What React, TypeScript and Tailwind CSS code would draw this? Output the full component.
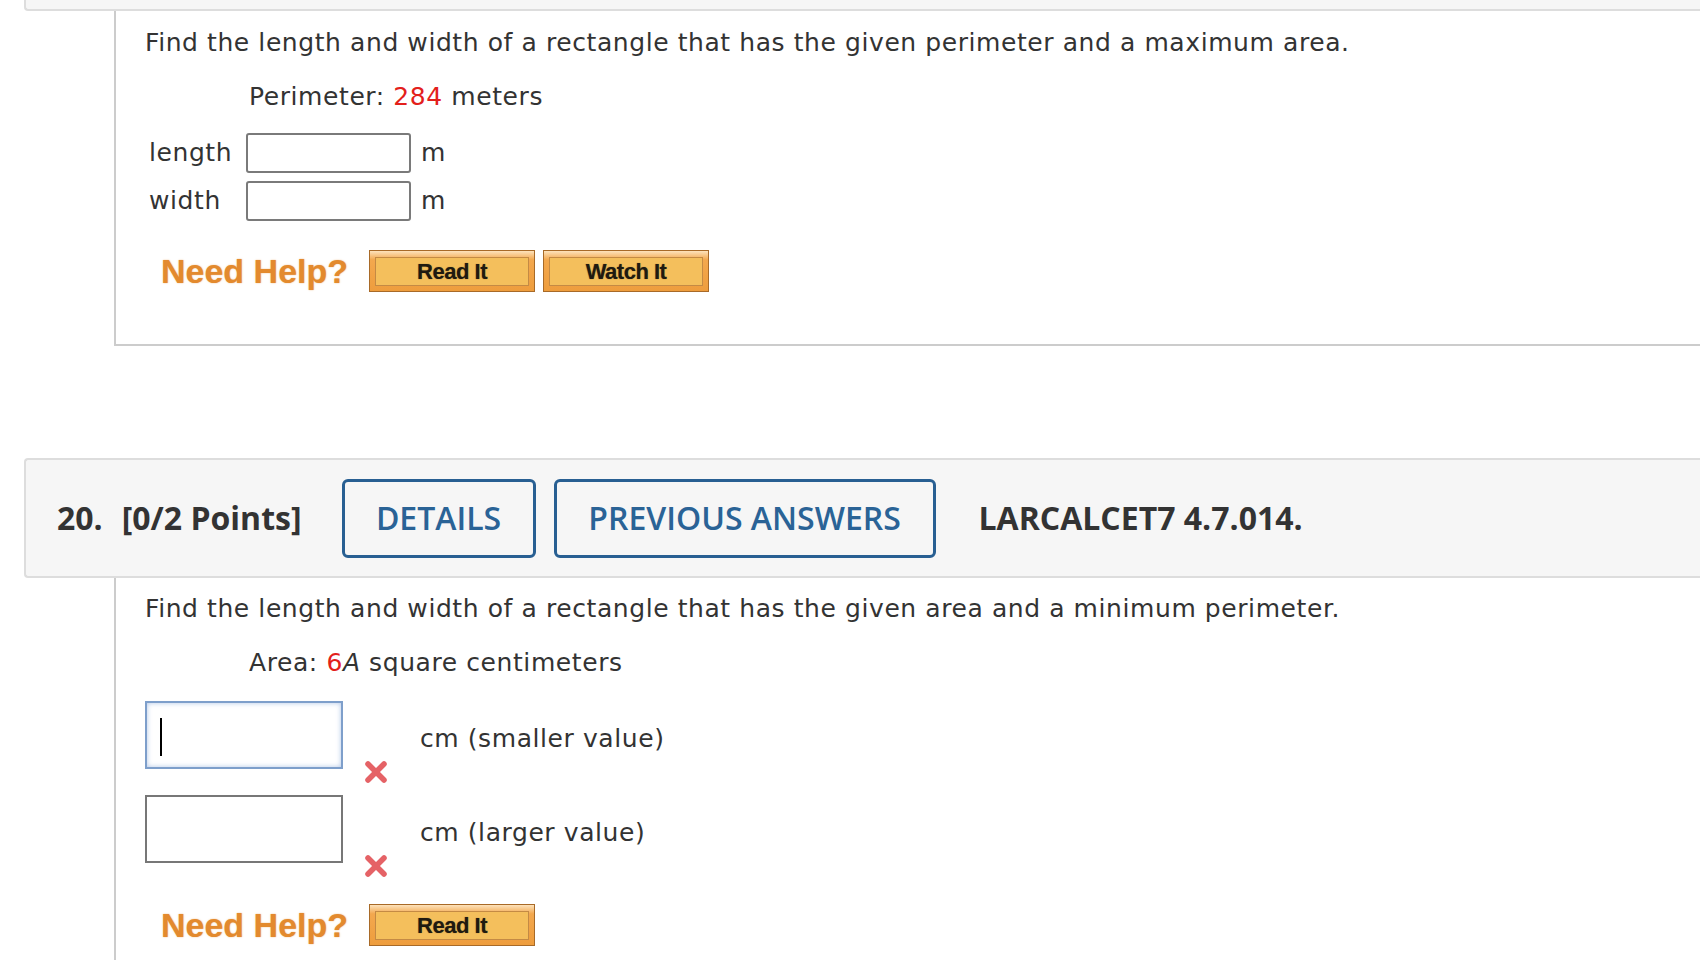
import React from 'react'

const body = { fontFamily: '"DejaVu Sans", Verdana, sans-serif' }
const head = { fontFamily: '"Open Sans", "Noto Sans", sans-serif' }
const arial = { fontFamily: '"Liberation Sans", Arial, sans-serif' }

// orange WebAssign style help button
function HelpButton({ label }: { label: string }) {
  return (
    <button
      type="button"
      className="w-[166px] h-[42px] border border-[#a86a28] bg-[linear-gradient(to_bottom,#fde2bb_0%,#f3a84e_22%,#ee9d3d_100%)] px-[5px] pt-[6px] pb-[5px]"
    >
      <div
        className="h-full w-full border border-[#c48a44] bg-[#f4bf5c] flex items-center justify-center text-[22px] font-bold tracking-[-0.5px] text-[#1f1a10] [text-shadow:0_0_1px_rgba(0,0,0,0.5)]"
        style={arial}
      >
        {label}
      </div>
    </button>
  )
}

function NeedHelp({ buttons }: { buttons: string[] }) {
  return (
    <div className="flex items-center tracking-normal">
      <span
        className="ml-[16px] text-[34px] font-bold leading-[42px] text-[#e38a2e] [text-shadow:0_0_1.5px_rgba(227,138,46,0.7)]"
        style={arial}
      >
        Need Help?
      </span>
      <div className="ml-[21px] flex gap-[8px]">
        {buttons.map((b) => (
          <HelpButton key={b} label={b} />
        ))}
      </div>
    </div>
  )
}

function WrongMark() {
  return (
    <svg width="26" height="24" viewBox="0 0 26 24" className="block">
      <g stroke="#e3555a" strokeWidth="5.5" strokeLinecap="round" opacity="0.92">
        <line x1="5" y1="4" x2="21" y2="20" />
        <line x1="21" y1="4" x2="5" y2="20" />
      </g>
    </svg>
  )
}

function AnswerRow({ unit, focused }: { unit: string; focused?: boolean }) {
  return (
    <div className="flex items-start">
      {focused ? (
        <div className="relative w-[198px] h-[68px] border-2 border-[#7e9fcb] bg-white shadow-[inset_0_0_5px_rgba(110,150,210,0.55)]">
          <span className="absolute left-[13px] top-[15px] w-[2px] h-[38px] bg-black" />
        </div>
      ) : (
        <input
          readOnly
          className="w-[198px] h-[68px] border-2 border-[#777777] bg-white outline-none"
        />
      )}
      <div className="ml-[20px] mt-[59px]">
        <WrongMark />
      </div>
      <span className="ml-[31px] mt-[22px] leading-[32px]">{unit}</span>
    </div>
  )
}

function HeaderButton({ label, width }: { label: string; width: string }) {
  return (
    <button
      type="button"
      className={`${width} h-[79px] rounded-[6px] border-[3px] border-[#285f92] bg-transparent text-[32px] font-semibold text-[#2a6396] flex items-center justify-center`}
      style={head}
    >
      {label}
    </button>
  )
}

export default function App() {
  return (
    <div
      className="w-[1700px] h-[960px] overflow-hidden bg-white flex flex-col text-[#333333] text-[25px] tracking-[0.58px]"
      style={body}
    >
      {/* tail of previous question header */}
      <div className="ml-[24px] h-[11px] shrink-0 bg-[#f6f6f6] border-b-2 border-l-2 border-[#dddddd] rounded-bl-[4px]" />

      {/* question 19 body */}
      <div className="ml-[114px] h-[335px] shrink-0 border-l-2 border-b-2 border-[#cccccc] pl-[29px] pt-[16px]">
        <p className="leading-[32px]">
          Find the length and width of a rectangle that has the given perimeter and a maximum area.
        </p>
        <p className="mt-[22px] ml-[104px] leading-[32px]">
          Perimeter: <span className="text-[#e3201b]">284</span> meters
        </p>
        <div className="mt-[20px] flex flex-col gap-[8px]">
          {['length', 'width'].map((l) => (
            <div key={l} className="flex items-center">
              <span className="w-[101px] pl-[4px] leading-[32px]">{l}</span>
              <input
                readOnly
                className="w-[165px] h-[40px] rounded-[3px] border-2 border-[#7a7a7a] bg-white outline-none"
              />
              <span className="ml-[10px] leading-[32px]">m</span>
            </div>
          ))}
        </div>
        <div className="mt-[29px]">
          <NeedHelp buttons={['Read It', 'Watch It']} />
        </div>
      </div>

      {/* question 20 header */}
      <div
        className="mt-[112px] ml-[24px] h-[120px] shrink-0 bg-[#f6f6f6] border-y-2 border-l-2 border-[#dddddd] rounded-l-[4px] flex items-center pl-[31px] tracking-normal"
        style={head}
      >
        <span className="text-[32px] font-bold text-[#333333]">20.</span>
        <span className="ml-[19px] text-[32px] font-bold text-[#333333]">[0/2 Points]</span>
        <div className="ml-[40px] flex gap-[18px]">
          <HeaderButton label="DETAILS" width="w-[194px]" />
          <HeaderButton label="PREVIOUS ANSWERS" width="w-[382px]" />
        </div>
        <span className="ml-[43px] text-[32px] font-bold text-[#333333]">LARCALCET7 4.7.014.</span>
      </div>

      {/* question 20 body */}
      <div className="ml-[114px] flex-1 border-l-2 border-[#cccccc] pl-[29px] pt-[15px]">
        <p className="leading-[32px]">
          Find the length and width of a rectangle that has the given area and a minimum perimeter.
        </p>
        <p className="mt-[22px] ml-[104px] leading-[32px]">
          Area: <span className="text-[#e3201b]">6</span>
          <i>A</i> square centimeters
        </p>
        <div className="mt-[22px] flex flex-col gap-[11px]">
          <AnswerRow unit="cm (smaller value)" focused />
          <AnswerRow unit="cm (larger value)" />
        </div>
        <div className="mt-[26px]">
          <NeedHelp buttons={['Read It']} />
        </div>
      </div>
    </div>
  )
}
